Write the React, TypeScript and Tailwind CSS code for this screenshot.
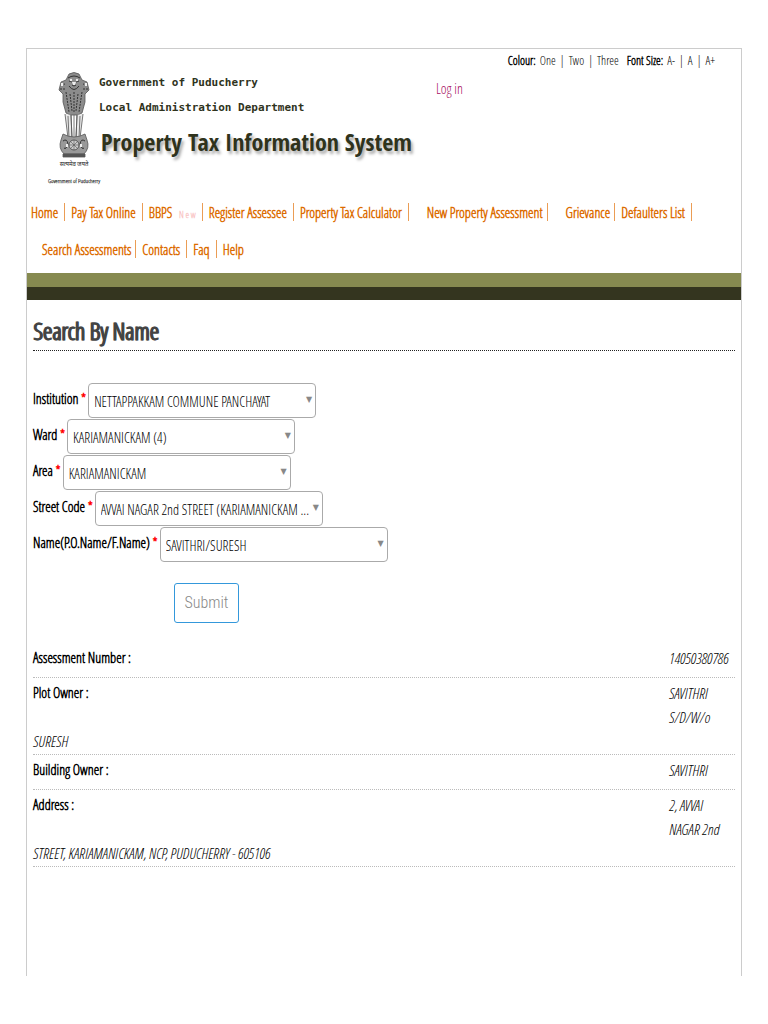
import type { ReactNode } from "react";

function Emblem() {
  return (
    <svg viewBox="0 0 34 86" className="h-[86px] w-[34px]" aria-label="State emblem of India" role="img">
      <g fill="#aaa" stroke="#555" strokeWidth=".8">
        <path d="M12 2 Q17 -1 22 2 L25 8 L30 10 L32 18 L28 22 L28 30 L25 41 L21 43 L13 43 L9 41 L6 30 L6 22 L2 18 L4 10 L9 8 Z" fill="#8c8c8c" />
        <path d="M8 42 L11 66 L15 66 L14 43 M26 42 L23 66 L19 66 L20 43" fill="#e8e8e8" />
        <path d="M14 43 L15 66 M17 43 V66 M20 43 L19 66 M11 44 L12 66 M23 44 L22 66" fill="none" stroke="#555" />
        <path d="M6 62 Q17 68 28 62 L30 68 Q33 76 27 82 L7 82 Q1 76 4 68 Z" fill="#999" />
        <circle cx="17" cy="73" r="5" fill="#ccc" stroke="#444" />
        <path d="M17 68 V78 M12 73 H22 M13.5 69.5 L20.5 76.5 M20.5 69.5 L13.5 76.5" strokeWidth=".6" />
        <path d="M6 82 H28 V85 H6 Z" fill="#555" />
      </g>
      <g fill="none" stroke="#333" strokeWidth="1">
        <path d="M11 6 Q17 2 23 6 M12 9 L15 10 M19 10 L22 9 M15 13 Q17 15 19 13 M12 14 Q17 21 22 14" />
        <path d="M4 13 L8 12 M3 17 L9 17 M30 13 L26 12 M31 17 L25 17 M9 20 L12 40 M25 20 L22 40 M13 22 L15 39 M21 22 L19 39 M17 20 V41" strokeDasharray="2 1" />
        <path d="M6 69 Q10 66 11 72 Q9 78 7 76 M28 69 Q24 66 23 72 Q25 78 27 76" />
      </g>
      <g fill="#eee">
        <circle cx="14" cy="8" r="1.2" />
        <circle cx="20" cy="8" r="1.2" />
        <path d="M15 10 H19 L18 13 H16 Z M9 72 h2 v3 h-2 z M23 72 h2 v3 h-2 z M4 11 h2 v3 h-2 z M28 11 h2 v3 h-2 z" />
      </g>
    </svg>
  );
}

function NavItem({ children, bar = true, tight = false, className = "" }: { children: ReactNode; bar?: boolean; tight?: boolean; className?: string }) {
  return (
    <li className={`flex items-center ${className}`}>
      <a href="#" className="whitespace-nowrap">{children}</a>
      {bar && <span className={`h-[18px] w-px bg-[#eb9d55] ${tight ? "ml-1" : "ml-[6px]"}`} />}
    </li>
  );
}

function Field({ id, label, value }: { id: string; label: string; value: string }) {
  return (
    <div className="flex h-9 items-center">
      <label htmlFor={id} className="pb-1 font-bold">
        {label} <span className="text-[#f00]">*</span>
      </label>
      <div className="relative ml-[2px] w-[228px]">
        <select id={id} className="h-[35px] w-full appearance-none truncate rounded border border-[#aaa] bg-white pt-[2px] pr-3 pl-[5px] text-[14px] text-black">
          <option>{value}</option>
        </select>
        <span className="pointer-events-none absolute top-[10px] right-1 font-['DejaVu_Sans',sans-serif] text-[8px] leading-[14px] text-[#888]">▼</span>
      </div>
    </div>
  );
}

function Detail({ label, lines, rest }: { label: string; lines: string[]; rest?: string }) {
  return (
    <div className="border-b border-dotted border-[#bbb] pt-[3px] pb-px">
      <div className="flex justify-between">
        <dt className="pb-[6px] font-bold">{label}</dt>
        <dd className="w-[66px] text-[15px] italic">
          {lines.map((line) => <span key={line} className="block whitespace-nowrap">{line}</span>)}
        </dd>
      </div>
      {rest && <dd className="text-[15px] italic">{rest}</dd>}
    </div>
  );
}

export default function App() {
  return (
    <div className="min-h-screen bg-white px-[26px] py-12 font-['Open_Sans_Condensed_Light','Noto_Sans',sans-serif] text-[14px] text-black">
      <div className="min-h-[928px] border border-b-0 border-[#ccc]">
        <header>
          <div className="flex h-[147px] items-start">
            <div className="mt-[23px] ml-[22px] flex w-[50px] flex-col items-center text-[#222]">
              <Emblem />
              <span lang="hi" className="whitespace-nowrap text-[6px] leading-[12px]">सत्यमेव जयते</span>
              <span className="mt-1 whitespace-nowrap text-[6px] leading-[14px] font-bold">Government of Puducherry</span>
            </div>
            <div className="mt-[21px] whitespace-nowrap text-[#2f331c]">
              <p className="font-['DejaVu_Sans_Mono',monospace] text-[11px] leading-[25px] font-bold">Government of Puducherry</p>
              <p className="font-['DejaVu_Sans_Mono',monospace] text-[11px] leading-[25px] font-bold">Local Administration Department</p>
              <h1 className="ml-[2px] font-['Open_Sans_Condensed',sans-serif] text-[24px] leading-[44px] font-bold [text-shadow:2px_3px_3px_#aaa]">Property Tax Information System</h1>
            </div>
            <a href="#" className="mt-[29px] ml-6 whitespace-nowrap text-[14px] text-[#a8105f]">Log in</a>
            <div className="mt-[2px] mr-[26px] ml-auto flex whitespace-nowrap text-[12px] leading-[20px]">
              <b className="mr-1">Colour:</b>
              <a href="#">One</a><span className="mx-1">|</span><a href="#">Two</a><span className="mx-1">|</span><a href="#">Three</a>
              <b className="mr-1 ml-2">Font Size:</b>
              <a href="#">A-</a><span className="mx-1">|</span><a href="#">A</a><span className="mx-1">|</span><a href="#">A+</a>
            </div>
          </div>
          <nav className="pb-[3px] font-bold text-[#dc6c00]">
            <ul className="flex h-8 gap-x-[6px] pl-1">
              <NavItem>Home</NavItem>
              <NavItem>Pay Tax Online</NavItem>
              <NavItem>BBPS <span className="ml-1 text-[9px] text-[#f9c4c4]">N e w</span></NavItem>
              <NavItem>Register Assessee</NavItem>
              <NavItem>Property Tax Calculator</NavItem>
              <NavItem className="ml-3" tight>New Property Assessment</NavItem>
              <NavItem className="ml-3" tight>Grievance</NavItem>
              <NavItem>Defaulters List</NavItem>
            </ul>
            <ul className="flex h-[42px] gap-x-[6px] pl-[15px]">
              <NavItem tight>Search Assessments</NavItem>
              <NavItem>Contacts</NavItem>
              <NavItem>Faq</NavItem>
              <NavItem bar={false}>Help</NavItem>
            </ul>
          </nav>
          <div className="h-[14px] bg-[#868a50]" />
          <div className="h-[13px] bg-[#34351f]" />
        </header>
        <main className="px-[6px] pt-3">
          <h2 className="border-b border-dotted border-[#222] text-[24px] leading-[38px] font-bold text-[#444] [text-shadow:1px_0_#444]">Search By Name</h2>
          <form className="mt-[31px]" onSubmit={(e) => e.preventDefault()}>
            <Field id="institution" label="Institution" value="NETTAPPAKKAM COMMUNE PANCHAYAT" />
            <Field id="ward" label="Ward" value="KARIAMANICKAM (4)" />
            <Field id="area" label="Area" value="KARIAMANICKAM" />
            <Field id="street" label="Street Code" value="AVVAI NAGAR 2nd STREET (KARIAMANICKAM ..." />
            <Field id="name" label="Name(P.O.Name/F.Name)" value="SAVITHRI/SURESH" />
            <button type="submit" className="mt-[21px] ml-[141px] block h-10 w-[65px] rounded-[3px] border border-[#3498db] bg-white font-['Roboto_Condensed_Light',sans-serif] text-[16px] text-[#888]">Submit</button>
          </form>
          <dl className="mt-5 leading-[24px]">
            <Detail label="Assessment Number :" lines={["14050380786"]} />
            <Detail label="Plot Owner :" lines={["SAVITHRI", "S/D/W/o"]} rest="SURESH" />
            <Detail label="Building Owner :" lines={["SAVITHRI"]} />
            <Detail label="Address :" lines={["2, AVVAI", "NAGAR 2nd"]} rest="STREET, KARIAMANICKAM, NCP, PUDUCHERRY - 605106" />
          </dl>
        </main>
      </div>
    </div>
  );
}
